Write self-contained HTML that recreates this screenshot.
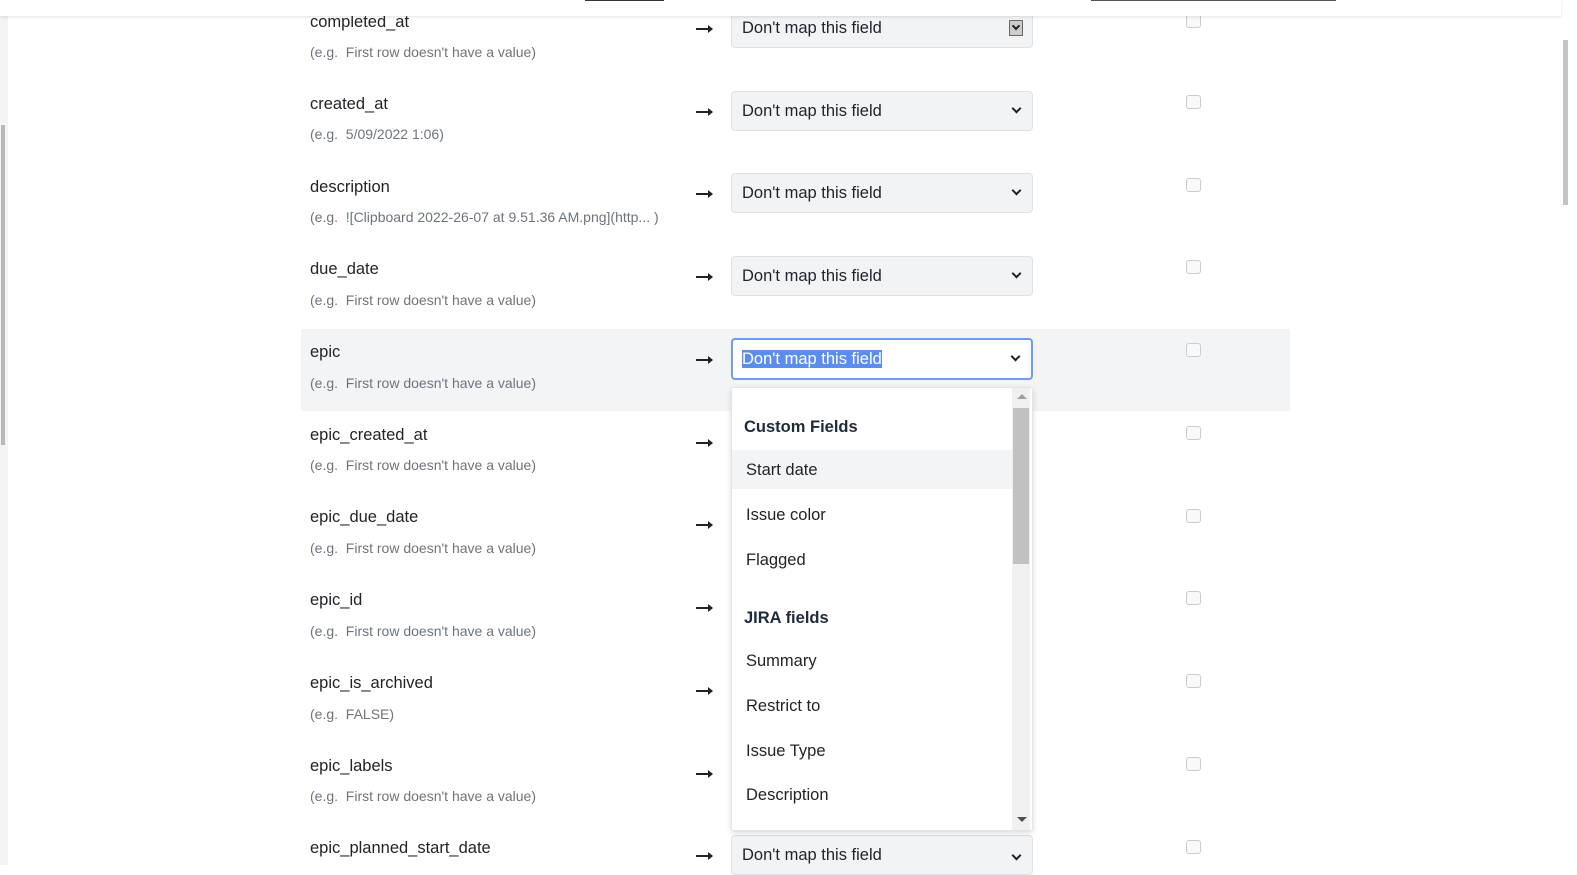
<!DOCTYPE html>
<html><head><meta charset="utf-8"><style>
*{box-sizing:border-box;margin:0;padding:0}
body{width:1577px;height:865px;overflow:hidden;background:#fff;font-family:"Liberation Sans",sans-serif;position:relative;color:#212529}
.abs{position:absolute}
.name{position:absolute;left:310px;font-size:16.5px;color:#212529;line-height:20px}
.hint{position:absolute;left:310px;font-size:14px;color:#6c757d;line-height:18px}
.arrow{position:absolute;left:696px;width:16px;height:2px;background:#222}
.arrow:after{content:"";position:absolute;right:-1px;top:-3px;border-left:5px solid #222;border-top:4px solid transparent;border-bottom:4px solid transparent}
.sel{position:absolute;left:731px;width:302px;height:40px;background:#f1f3f5;border:1px solid #dee2e6;border-radius:4px;font-size:16.5px;line-height:38px;padding-left:10px;color:#212529}
.chev{position:absolute;right:12px;top:13px;width:7px;height:7px;border-right:2px solid #222;border-bottom:2px solid #222;transform:rotate(45deg)}
.cb{position:absolute;left:1186px;width:15px;height:14px;border:1px solid #ccc;border-radius:3px;background:#f8f9fa}
.item{position:absolute;left:746px;font-size:16.5px;color:#212529;line-height:20px}
.grp{position:absolute;left:744px;font-size:16.5px;font-weight:bold;color:#1f2a3c;line-height:20px}
</style></head><body>
<div class="abs" style="left:0;top:0;width:8px;height:865px;background:#f4f4f5"></div>
<div class="abs" style="left:1px;top:125px;width:4px;height:320px;background:#b8b8b8"></div>
<div class="abs" style="left:1561px;top:0;width:16px;height:865px;background:#fff"></div>
<div class="abs" style="left:1563px;top:40px;width:5px;height:165px;background:#c4c4c4"></div>
<div class="abs" style="left:301px;top:329px;width:989px;height:82px;background:#f3f4f6"></div>

<div class="name" style="top:12px">completed_at</div><div class="hint" style="top:43px">(e.g.&nbsp; First row doesn't have a value)</div>
<div class="name" style="top:94px">created_at</div><div class="hint" style="top:125px">(e.g.&nbsp; 5/09/2022 1:06)</div>
<div class="name" style="top:177px">description</div><div class="hint" style="top:208px">(e.g.&nbsp; ![Clipboard 2022-26-07 at 9.51.36 AM.png](http... )</div>
<div class="name" style="top:259px">due_date</div><div class="hint" style="top:291px">(e.g.&nbsp; First row doesn't have a value)</div>
<div class="name" style="top:342px">epic</div><div class="hint" style="top:374px">(e.g.&nbsp; First row doesn't have a value)</div>
<div class="name" style="top:425px">epic_created_at</div><div class="hint" style="top:456px">(e.g.&nbsp; First row doesn't have a value)</div>
<div class="name" style="top:507px">epic_due_date</div><div class="hint" style="top:539px">(e.g.&nbsp; First row doesn't have a value)</div>
<div class="name" style="top:590px">epic_id</div><div class="hint" style="top:622px">(e.g.&nbsp; First row doesn't have a value)</div>
<div class="name" style="top:673px">epic_is_archived</div><div class="hint" style="top:705px">(e.g.&nbsp; FALSE)</div>
<div class="name" style="top:756px">epic_labels</div><div class="hint" style="top:787px">(e.g.&nbsp; First row doesn't have a value)</div>
<div class="name" style="top:838px">epic_planned_start_date</div>

<div class="arrow" style="top:28px"></div><div class="arrow" style="top:111px"></div><div class="arrow" style="top:193px"></div><div class="arrow" style="top:276px"></div><div class="arrow" style="top:359px"></div><div class="arrow" style="top:442px"></div><div class="arrow" style="top:524px"></div><div class="arrow" style="top:607px"></div><div class="arrow" style="top:690px"></div><div class="arrow" style="top:773px"></div><div class="arrow" style="top:855px"></div>

<div class="sel" style="top:8px">Don't map this field<div class="abs" style="right:9px;top:11px;width:14px;height:16px;border:1px solid #666;background:#ccc"><div class="chev" style="right:3px;top:2px;width:6px;height:6px"></div></div></div>
<div class="sel" style="top:91px">Don't map this field<div class="chev"></div></div>
<div class="sel" style="top:173px">Don't map this field<div class="chev"></div></div>
<div class="sel" style="top:256px">Don't map this field<div class="chev"></div></div>
<div class="sel" style="top:338px;height:42px;background:#fff;border:2px solid #6e9cf5;line-height:38px;padding-left:9px"><span style="background:#5b8def;color:#fff">Don't map this field</span><div class="chev"></div></div>
<div class="sel" style="top:421px"></div><div class="sel" style="top:504px"></div><div class="sel" style="top:586px"></div><div class="sel" style="top:669px"></div><div class="sel" style="top:752px"></div>
<div class="sel" style="top:835px">Don't map this field<div class="chev" style="top:16px"></div></div>

<div class="cb" style="top:14px"></div><div class="cb" style="top:95px"></div><div class="cb" style="top:178px"></div><div class="cb" style="top:260px"></div><div class="cb" style="top:343px"></div><div class="cb" style="top:426px"></div><div class="cb" style="top:509px"></div><div class="cb" style="top:591px"></div><div class="cb" style="top:674px"></div><div class="cb" style="top:757px"></div><div class="cb" style="top:840px"></div>

<div class="abs" style="left:731px;top:387px;width:302px;height:444px;background:#fff;border:1px solid #e2e4e8;border-radius:3px;box-shadow:0 2px 6px rgba(0,0,0,.15)"></div>
<div class="abs" style="left:1012px;top:388px;width:18px;height:442px;background:#f0f0f0"></div>
<div class="abs" style="left:1013px;top:408px;width:16px;height:156px;background:#c1c1c1"></div>
<div class="abs" style="left:1017px;top:394px;width:0;height:0;border-left:5px solid transparent;border-right:5px solid transparent;border-bottom:5px solid #a0a0a0"></div>
<div class="abs" style="left:1017px;top:817px;width:0;height:0;border-left:5px solid transparent;border-right:5px solid transparent;border-top:5px solid #505050"></div>
<div class="abs" style="left:732px;top:450px;width:280px;height:39px;background:#f3f4f6"></div>
<div class="grp" style="top:417px">Custom Fields</div>
<div class="item" style="top:460px">Start date</div>
<div class="item" style="top:505px">Issue color</div>
<div class="item" style="top:550px">Flagged</div>
<div class="grp" style="top:608px">JIRA fields</div>
<div class="item" style="top:651px">Summary</div>
<div class="item" style="top:696px">Restrict to</div>
<div class="item" style="top:741px">Issue Type</div>
<div class="item" style="top:785px">Description</div>

<div class="abs" style="left:0;top:0;width:1561px;height:16px;background:#fff;box-shadow:0 1px 3px rgba(0,0,0,.12)"></div>
<div class="abs" style="left:585px;top:0;width:79px;height:1px;background:#333"></div>
<div class="abs" style="left:1091px;top:0;width:245px;height:1px;background:#555"></div>
</body></html>
